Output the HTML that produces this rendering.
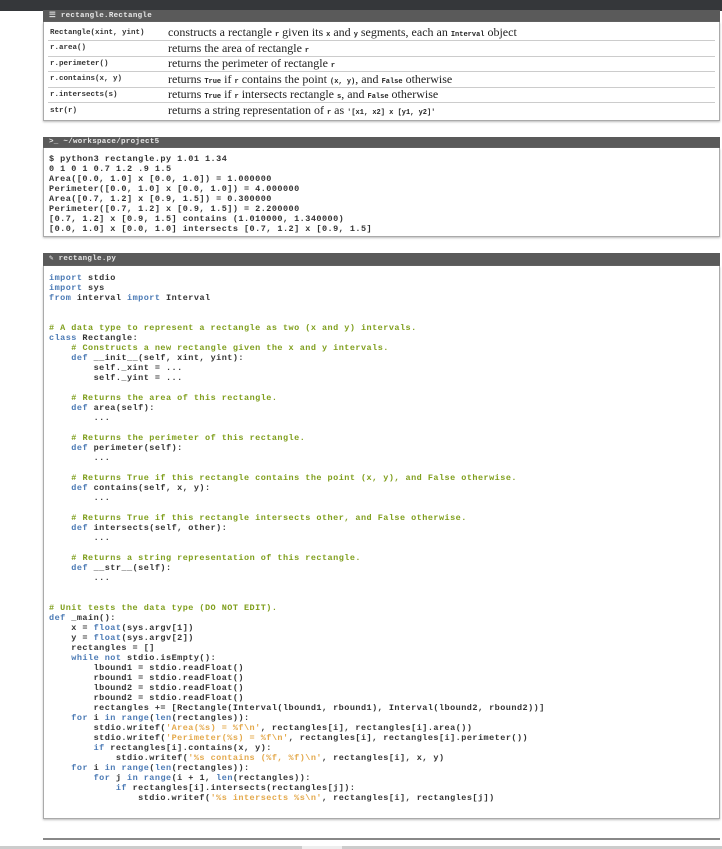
<!DOCTYPE html>
<html><head><meta charset="utf-8"><style>
*{margin:0;padding:0;box-sizing:border-box}
body{width:722px;height:849px;background:#fff;position:relative;overflow:hidden;font-family:"Liberation Mono",monospace;color:#333}
.top{position:absolute;left:0;top:0;width:722px;height:11px;background:#35373a}
.hdr{position:absolute;left:43px;width:677px;background:#5a5a5a;color:#e8e8e8;font:bold 7.5px/12px "Liberation Mono",monospace;padding-left:6px;letter-spacing:.3px}
.box{position:absolute;left:43px;width:677px;border:1px solid #aaa;border-top:none;box-shadow:0 1px 2px #bbb;background:#fff}
pre{font:bold 8.5px/10px "Liberation Mono",monospace;letter-spacing:.47px;color:#333;position:absolute;left:5px}
.c{color:#7f9e1c}.k{color:#4a79b4}.s{color:#e3a84a}
table{border-collapse:collapse;position:absolute;left:4px;top:3px;width:667px}
td{border-bottom:1px solid #ccc;height:15.5px;padding:0 0 0 1px;vertical-align:middle}
td.m{font:bold 7.5px "Liberation Mono",monospace;width:119px;padding-left:2px}
td.t{font:12px/13px "Liberation Serif",serif;color:#222}
td.t code{font:bold 7px "Liberation Mono",monospace}
tr:last-child td{border-bottom:none}
</style></head><body>
<div class="top"></div>
<div class="hdr" style="top:10px;height:12px">☰ rectangle.Rectangle</div>
<div class="box" style="top:22px;height:99px">
<table>
<tr><td class="m">Rectangle(xint, yint)</td><td class="t">constructs a rectangle <code>r</code> given its <code>x</code> and <code>y</code> segments, each an <code>Interval</code> object</td></tr>
<tr><td class="m">r.area()</td><td class="t">returns the area of rectangle <code>r</code></td></tr>
<tr><td class="m">r.perimeter()</td><td class="t">returns the perimeter of rectangle <code>r</code></td></tr>
<tr><td class="m">r.contains(x, y)</td><td class="t">returns <code>True</code> if <code>r</code> contains the point <code>(x, y)</code>, and <code>False</code> otherwise</td></tr>
<tr><td class="m">r.intersects(s)</td><td class="t">returns <code>True</code> if <code>r</code> intersects rectangle <code>s</code>, and <code>False</code> otherwise</td></tr>
<tr><td class="m">str(r)</td><td class="t">returns a string representation of <code>r</code> as <code>'[x1, x2] x [y1, y2]'</code></td></tr>
</table></div>

<div class="hdr" style="top:137px;height:11px;line-height:11px">&gt;_ ~/workspace/project5</div>
<div class="box" style="top:148px;height:89px">
<pre style="top:6px">$ python3 rectangle.py 1.01 1.34
0 1 0 1 0.7 1.2 .9 1.5
Area([0.0, 1.0] x [0.0, 1.0]) = 1.000000
Perimeter([0.0, 1.0] x [0.0, 1.0]) = 4.000000
Area([0.7, 1.2] x [0.9, 1.5]) = 0.300000
Perimeter([0.7, 1.2] x [0.9, 1.5]) = 2.200000
[0.7, 1.2] x [0.9, 1.5] contains (1.010000, 1.340000)
[0.0, 1.0] x [0.0, 1.0] intersects [0.7, 1.2] x [0.9, 1.5]</pre></div>

<div class="hdr" style="top:253px;height:13px;line-height:13px">✎ rectangle.py</div>
<div class="box" style="top:266px;height:553px">
<pre style="top:7px"><span class="k">import</span> stdio
<span class="k">import</span> sys
<span class="k">from</span> interval <span class="k">import</span> Interval


<span class="c"># A data type to represent a rectangle as two (x and y) intervals.</span>
<span class="k">class</span> Rectangle:
    <span class="c"># Constructs a new rectangle given the x and y intervals.</span>
    <span class="k">def</span> __init__(self, xint, yint):
        self._xint = ...
        self._yint = ...

    <span class="c"># Returns the area of this rectangle.</span>
    <span class="k">def</span> area(self):
        ...

    <span class="c"># Returns the perimeter of this rectangle.</span>
    <span class="k">def</span> perimeter(self):
        ...

    <span class="c"># Returns True if this rectangle contains the point (x, y), and False otherwise.</span>
    <span class="k">def</span> contains(self, x, y):
        ...

    <span class="c"># Returns True if this rectangle intersects other, and False otherwise.</span>
    <span class="k">def</span> intersects(self, other):
        ...

    <span class="c"># Returns a string representation of this rectangle.</span>
    <span class="k">def</span> __str__(self):
        ...


<span class="c"># Unit tests the data type (DO NOT EDIT).</span>
<span class="k">def</span> _main():
    x = <span class="k">float</span>(sys.argv[1])
    y = <span class="k">float</span>(sys.argv[2])
    rectangles = []
    <span class="k">while not</span> stdio.isEmpty():
        lbound1 = stdio.readFloat()
        rbound1 = stdio.readFloat()
        lbound2 = stdio.readFloat()
        rbound2 = stdio.readFloat()
        rectangles += [Rectangle(Interval(lbound1, rbound1), Interval(lbound2, rbound2))]
    <span class="k">for</span> i <span class="k">in range</span>(<span class="k">len</span>(rectangles)):
        stdio.writef(<span class="s">'Area(%s) = %f\n'</span>, rectangles[i], rectangles[i].area())
        stdio.writef(<span class="s">'Perimeter(%s) = %f\n'</span>, rectangles[i], rectangles[i].perimeter())
        <span class="k">if</span> rectangles[i].contains(x, y):
            stdio.writef(<span class="s">'%s contains (%f, %f)\n'</span>, rectangles[i], x, y)
    <span class="k">for</span> i <span class="k">in range</span>(<span class="k">len</span>(rectangles)):
        <span class="k">for</span> j <span class="k">in range</span>(i + 1, <span class="k">len</span>(rectangles)):
            <span class="k">if</span> rectangles[i].intersects(rectangles[j]):
                stdio.writef(<span class="s">'%s intersects %s\n'</span>, rectangles[i], rectangles[j])</pre></div>

<div style="position:absolute;left:43px;top:838px;width:677px;height:2px;background:#888"></div>
<div style="position:absolute;left:0;top:846px;width:722px;height:3px;background:#ccc"></div>
<div style="position:absolute;left:302px;top:846px;width:40px;height:3px;background:#eee"></div>
</body></html>
